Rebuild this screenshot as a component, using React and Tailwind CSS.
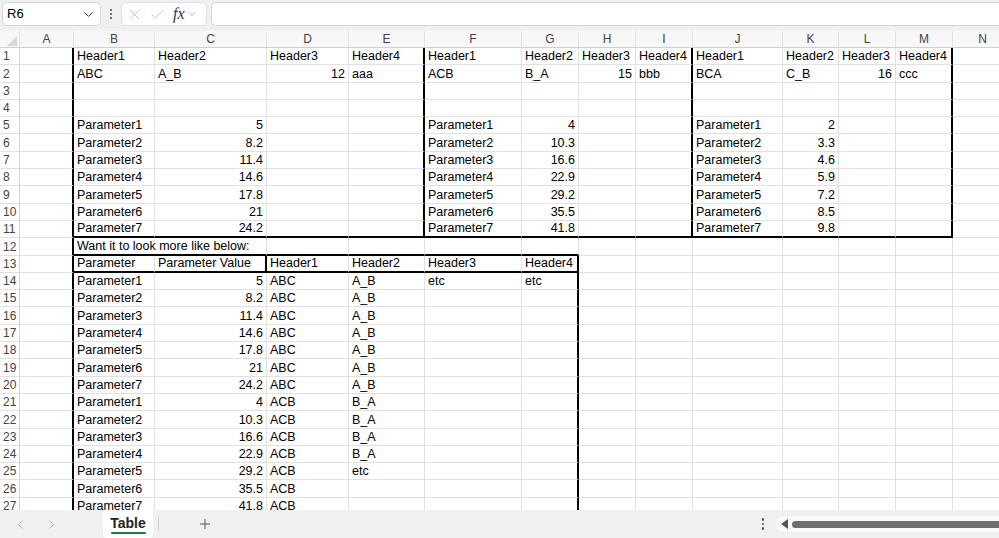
import React from 'react';
import { ChevronDown, ChevronLeft, ChevronRight, X, Check, Plus } from 'lucide-react';

const COLS = ['', 'A', 'B', 'C', 'D', 'E', 'F', 'G', 'H', 'I', 'J', 'K', 'L', 'M', 'N'];
const WIDTHS = [20, 54, 81, 112, 82, 76, 97, 57, 57, 57, 90, 56, 57, 57, 60];
const FONT = { fontFamily: '"Liberation Sans", Arial, sans-serif' };

// cell data: row -> col index -> [value, rightAlign]
const DATA = {
  1: { 2: ['Header1'], 3: ['Header2'], 4: ['Header3'], 5: ['Header4'], 6: ['Header1'], 7: ['Header2'], 8: ['Header3'], 9: ['Header4'], 10: ['Header1'], 11: ['Header2'], 12: ['Header3'], 13: ['Header4'] },
  2: { 2: ['ABC'], 3: ['A_B'], 4: ['12', true], 5: ['aaa'], 6: ['ACB'], 7: ['B_A'], 8: ['15', true], 9: ['bbb'], 10: ['BCA'], 11: ['C_B'], 12: ['16', true], 13: ['ccc'] },
  12: { 2: ['Want it to look more like below:'] },
  13: { 2: ['Parameter'], 3: ['Parameter Value'], 4: ['Header1'], 5: ['Header2'], 6: ['Header3'], 7: ['Header4'] },
};

const v1 = ['5', '8.2', '11.4', '14.6', '17.8', '21', '24.2'];
const v2 = ['4', '10.3', '16.6', '22.9', '29.2', '35.5', '41.8'];
const v3 = ['2', '3.3', '4.6', '5.9', '7.2', '8.5', '9.8'];
for (let i = 0; i < 7; i++) {
  DATA[5 + i] = {
    2: ['Parameter' + (i + 1)], 3: [v1[i], true],
    6: ['Parameter' + (i + 1)], 7: [v2[i], true],
    10: ['Parameter' + (i + 1)], 11: [v3[i], true],
  };
  DATA[14 + i] = { 2: ['Parameter' + (i + 1)], 3: [v1[i], true], 4: ['ABC'], 5: ['A_B'] };
  DATA[21 + i] = { 2: ['Parameter' + (i + 1)], 3: [v2[i], true], 4: ['ACB'] };
}
DATA[14][6] = ['etc'];
DATA[14][7] = ['etc'];
for (let r = 21; r <= 24; r++) DATA[r][5] = ['B_A'];
DATA[25][5] = ['etc'];

function rightBorder(r, c) {
  if (r === 12 && c === 2) return 'border-r-0';
  if (c === 1) return 'border-r-2 border-r-black';
  if ([5, 9, 13].includes(c) && r <= 11) return 'border-r-2 border-r-black';
  if (c === 3 && r === 13) return 'border-r-2 border-r-black';
  if (c === 7 && r >= 13) return 'border-r-2 border-r-black';
  return 'border-r border-r-[#e1e1e1]';
}

function bottomBorder(r, c) {
  if (r === 11 && c >= 2 && c <= 13) return 'border-b-2 border-b-black';
  if ((r === 12 || r === 13) && c >= 2 && c <= 7) return 'border-b-2 border-b-black';
  return 'border-b border-b-[#e1e1e1]';
}

function Row({ r }) {
  const row = DATA[r] || {};
  return (
    <div className="flex h-[17.3px] shrink-0">
      <div
        className="shrink-0 flex items-end pl-[3px] text-[12px] leading-[15px] text-[#444] bg-white border-r border-r-[#d4d4d4] border-b border-b-[#e1e1e1]"
        style={{ width: WIDTHS[0] }}
      >
        {r}
      </div>
      {WIDTHS.slice(1).map((w, i) => {
        const c = i + 1;
        const cell = row[c];
        return (
          <div
            key={c}
            className={`shrink-0 relative flex items-end text-[12.5px] leading-[15px] text-black whitespace-nowrap ${rightBorder(r, c)} ${bottomBorder(r, c)} ${cell && cell[1] ? 'justify-end pr-[3px]' : 'pl-[3px]'}`}
            style={{ width: w }}
          >
            {cell && <span className={r === 12 ? 'relative z-10' : ''}>{cell[0]}</span>}
          </div>
        );
      })}
    </div>
  );
}

export default function App() {
  const rows = [];
  for (let r = 1; r <= 28; r++) rows.push(r);

  return (
    <div className="w-[999px] h-[538px] overflow-hidden flex flex-col bg-white" style={FONT}>
      {/* formula bar */}
      <div className="h-[31px] shrink-0 bg-[#f0f0f0] flex items-start pt-[2px] pl-[2px] gap-0">
        <div className="w-[99px] h-[24px] bg-white rounded-[5px] border border-[#d6d6d6] flex items-center justify-between pl-[4px] pr-[4px]">
          <span className="text-[13px] text-black">R6</span>
          <ChevronDown size={15} strokeWidth={1.6} className="text-[#333]" />
        </div>
        <div className="w-[20px] h-[24px] flex flex-col items-center justify-center gap-[2px]">
          <span className="w-[2px] h-[2px] bg-[#444] rounded-full" />
          <span className="w-[2px] h-[2px] bg-[#444] rounded-full" />
          <span className="w-[2px] h-[2px] bg-[#444] rounded-full" />
        </div>
        <div className="w-[86px] h-[24px] bg-white rounded-[5px] border border-[#e0e0e0] flex items-center pl-[4px] gap-[6px]">
          <X size={17} strokeWidth={1.2} className="text-[#b5b5b5]" />
          <Check size={17} strokeWidth={1.2} className="text-[#b5b5b5]" />
          <span className="text-[16px] italic text-[#333] ml-[1px]" style={{ fontFamily: '"Liberation Serif", serif' }}>fx</span>
          <ChevronDown size={12} strokeWidth={1.5} className="text-[#999] -ml-[5px]" />
        </div>
        <div className="flex-1 h-[24px] ml-[4px] bg-white rounded-l-[5px] border border-r-0 border-[#d6d6d6]" />
      </div>

      {/* column headers */}
      <div className="h-[17px] shrink-0 flex bg-[#f7f7f7] border-b border-b-[#d0d0d0]">
        {COLS.map((col, i) => (
          <div
            key={i}
            className="shrink-0 relative flex items-center justify-center text-[12px] text-[#444] border-r border-r-[#e2e2e2]"
            style={{ width: WIDTHS[i] }}
          >
            {i === 0 ? (
              <svg width="10" height="10" viewBox="0 0 10 10" className="absolute right-[2px] bottom-[1px]">
                <polygon points="10,0 10,10 0,10" fill="#d8d8d8" />
              </svg>
            ) : (
              col
            )}
          </div>
        ))}
      </div>

      {/* grid */}
      <div className="flex-1 overflow-hidden flex flex-col">
        {rows.map(r => (
          <Row key={r} r={r} />
        ))}
      </div>

      {/* sheet tabs */}
      <div className="h-[28px] shrink-0 bg-[#f0f0f0] flex items-stretch">
        <div className="w-[103px] flex items-center">
          <ChevronLeft size={15} strokeWidth={1.3} className="text-[#a8a8a8] ml-[13px]" />
          <ChevronRight size={15} strokeWidth={1.3} className="text-[#a8a8a8] ml-[16px]" />
        </div>
        <div className="w-[50px] bg-white rounded-b-[4px] flex flex-col items-center justify-center relative">
          <span className="text-[14px] font-bold text-[#222] -mt-[2px]">Table</span>
          <span className="absolute bottom-[4px] left-[8px] right-[7px] h-[2px] rounded-full bg-[#107c41]" />
        </div>
        <div className="w-[1px] h-[14px] bg-[#d0d0d0] self-center ml-[5px]" />
        <div className="w-[90px] flex items-center">
          <Plus size={16} strokeWidth={1.3} className="text-[#444] ml-[38px]" />
        </div>
        <div className="flex-1" />
        <div className="w-[16px] flex flex-col items-center justify-center gap-[2px] mr-[5px]">
          <span className="w-[2.5px] h-[2.5px] bg-[#555] rounded-full" />
          <span className="w-[2.5px] h-[2.5px] bg-[#555] rounded-full" />
          <span className="w-[2.5px] h-[2.5px] bg-[#555] rounded-full" />
        </div>
        <div className="w-[223px] self-center h-[16px] bg-[#f9f9f9] rounded-l-full flex items-center pl-[5px]">
          <svg width="7" height="10" viewBox="0 0 7 10">
            <polygon points="7,0 7,10 0,5" fill="#555" />
          </svg>
          <div className="flex-1 h-[7px] ml-[4px] bg-[#6e6e6e] rounded-l-full" />
        </div>
      </div>
    </div>
  );
}
